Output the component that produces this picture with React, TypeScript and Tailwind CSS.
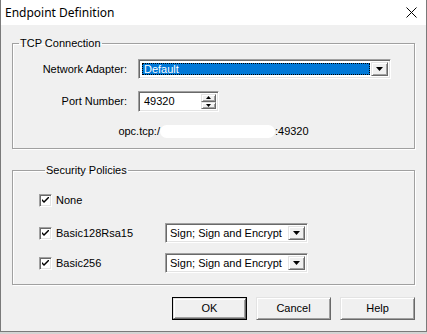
import type { ReactNode } from "react";

const sunken =
  "border border-t-[#a0a0a0] border-l-[#a0a0a0] border-b-white border-r-white shadow-[inset_1px_1px_0_#696969,inset_-1px_-1px_0_#e3e3e3]";
const raised =
  "border border-t-[#e3e3e3] border-l-[#e3e3e3] border-b-[#696969] border-r-[#696969] bg-[#f0f0f0] shadow-[inset_1px_1px_0_#fff,inset_-1px_-1px_0_#a0a0a0]";

function DownArrow() {
  return (
    <svg width="7" height="4" viewBox="0 0 7 4" aria-hidden="true">
      <path d="M0 0h7L3.5 4z" fill="#000" />
    </svg>
  );
}

function Combo({
  value,
  width,
  selected = false,
}: {
  value: string;
  width: string;
  selected?: boolean;
}) {
  return (
    <div className={`flex h-[20px] bg-white p-[2px] ${sunken} ${width}`}>
      <div className="flex min-w-0 flex-1 p-px">
        <div
          className={
            selected
              ? "flex flex-1 items-center border border-dotted border-[#000] bg-[#0078d7] pl-px text-white"
              : "flex flex-1 items-center pl-px text-black"
          }
        >
          {value}
        </div>
      </div>
      <div className={`flex w-[17px] shrink-0 items-center justify-center ${raised}`}>
        <DownArrow />
      </div>
    </div>
  );
}

function Spin({ value }: { value: string }) {
  return (
    <div className={`flex h-[21px] w-[81px] bg-white p-[2px] ${sunken}`}>
      <div className="flex flex-1 items-center pl-[3px]">{value}</div>
      <div className="flex w-[15px] flex-col">
        <div className={`flex flex-1 items-center justify-center ${raised}`}>
          <svg width="5" height="3" viewBox="0 0 5 3" aria-hidden="true">
            <path d="M0 3h5L2.5 0z" fill="#000" />
          </svg>
        </div>
        <div className={`flex flex-1 items-center justify-center ${raised}`}>
          <svg width="5" height="3" viewBox="0 0 5 3" aria-hidden="true">
            <path d="M0 0h5L2.5 3z" fill="#000" />
          </svg>
        </div>
      </div>
    </div>
  );
}

function Check({ label }: { label: string }) {
  return (
    <div className="flex w-[126px] items-center gap-[4px]">
      <div className={`flex h-[13px] w-[13px] items-center justify-center bg-white ${sunken}`}>
        <svg width="7" height="7" viewBox="0 0 7 7" aria-hidden="true">
          <path d="M0 2v2l2 2 5-5V-1L2 4z" fill="#000" />
        </svg>
      </div>
      <span>{label}</span>
    </div>
  );
}

function Group({ title, children, className = "" }: { title: string; children: ReactNode; className?: string }) {
  return (
    <fieldset
      className={`border border-[#a0a0a0] shadow-[inset_1px_1px_0_#fff,1px_1px_0_#fff] ${className}`}
    >
      <legend className="ml-[6px] px-px leading-[13px]">{title}</legend>
      {children}
    </fieldset>
  );
}

function Button({ label, primary = false }: { label: string; primary?: boolean }) {
  return (
    <button
      type="button"
      className={
        primary
          ? "h-[23px] w-[75px] border border-[#000] bg-[#f0f0f0] p-0"
          : "h-[23px] w-[75px] p-0"
      }
    >
      <div className={`flex h-full w-full items-center justify-center ${raised}`}>{label}</div>
    </button>
  );
}

export default function App() {
  return (
    <div className="h-[334px] w-[427px] bg-[#d4d4d4]">
      <div
        className="flex h-[332px] w-[427px] flex-col border-x border-b border-[#7a7a7a] bg-[#f0f0f0] text-[11px] text-black"
        style={{ fontFamily: '"Liberation Sans", Arial, sans-serif' }}
      >
        <header className="flex h-[25px] shrink-0 items-center justify-between bg-white pl-[4px] pr-[9px]">
          <span className="text-[12px]" style={{ fontFamily: '"Noto Sans", sans-serif' }}>
            Endpoint Definition
          </span>
          <svg width="11" height="11" viewBox="0 0 11 11" aria-hidden="true">
            <path d="M0.5 0.5l10 10M10.5 0.5l-10 10" stroke="#000" strokeWidth="1" />
          </svg>
        </header>

        <main className="flex flex-1 flex-col px-[11px] pt-[12px]">
          <Group title="TCP Connection" className="pb-[10px]">
            <div className="mt-[9px] flex flex-col gap-[12px]">
              <div className="flex items-center gap-[11px]">
                <span className="w-[114px] text-right">Network Adapter:</span>
                <Combo value="Default" width="w-[253px]" selected />
              </div>
              <div className="flex items-center gap-[11px]">
                <span className="w-[114px] text-right">Port Number:</span>
                <Spin value="49320" />
              </div>
            </div>
            <div className="mt-[13px] flex items-center justify-center leading-[13px]">
              <span>opc.tcp:/</span>
              <span className="h-[13px] w-[115px] rounded-full bg-white" />
              <span>:49320</span>
            </div>
          </Group>

          <Group title="Security Policies" className="mt-[15px] pb-[11px] pl-[26px]">
            <div className="mt-[13px] flex h-[21px] items-center">
              <Check label="None" />
            </div>
            <div className="mt-[12px] flex items-center">
              <Check label="Basic128Rsa15" />
              <Combo value="Sign; Sign and Encrypt" width="w-[143px]" />
            </div>
            <div className="mt-[10px] flex items-center">
              <Check label="Basic256" />
              <Combo value="Sign; Sign and Encrypt" width="w-[143px]" />
            </div>
          </Group>

          <div className="mt-[12px] flex justify-end gap-[9px]">
            <Button label="OK" primary />
            <Button label="Cancel" />
            <Button label="Help" />
          </div>
        </main>
      </div>
    </div>
  );
}
